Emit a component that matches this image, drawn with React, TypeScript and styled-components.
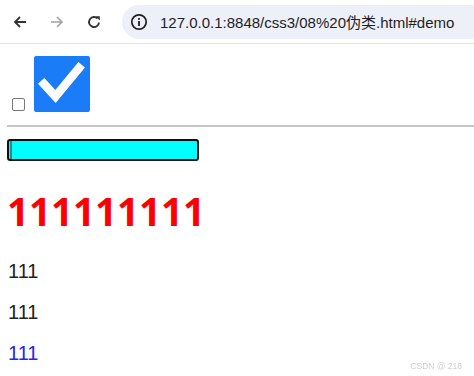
import styled, { createGlobalStyle } from 'styled-components'

const GlobalStyle = createGlobalStyle`
  html, body {
    margin: 0;
    padding: 0;
    background: #fff;
    font-family: "Liberation Sans", Arial, "Noto Sans CJK SC", sans-serif;
  }
`

const BrowserBar = () => {
  return <Toolbar>
    <NavButton>
      <svg width="16" height="16" viewBox="0 0 16 16">
        <path d="M14 8H3M8 3L3 8l5 5" fill="none" stroke="#333" strokeWidth="1.8" />
      </svg>
    </NavButton>
    <NavButton>
      <svg width="16" height="16" viewBox="0 0 16 16">
        <path d="M2 8h11M8 3l5 5-5 5" fill="none" stroke="#a2a2a2" strokeWidth="1.6" />
      </svg>
    </NavButton>
    <NavButton>
      <svg width="16" height="16" viewBox="0 0 16 16">
        <path d="M13 8.5A5 5 0 1 1 11.5 4.4" fill="none" stroke="#333" strokeWidth="1.9" />
        <path d="M9.5 2.2h4.3v4.3z" fill="#333" />
      </svg>
    </NavButton>
    <UrlPill>
      <svg width="18" height="18" viewBox="0 0 18 18">
        <circle cx="9" cy="9" r="7.2" fill="none" stroke="#1f1f1f" strokeWidth="1.7" />
        <rect x="8.1" y="8" width="1.8" height="5" fill="#1f1f1f" />
        <rect x="8.1" y="5" width="1.8" height="1.8" fill="#1f1f1f" />
      </svg>
      <UrlText>127.0.0.1:8848/css3/08%20伪类.html#demo</UrlText>
    </UrlPill>
  </Toolbar>
}

const App = () => {
  return <>
    <GlobalStyle />
    <BrowserBar />
    <Page>
      <CheckRow>
        <SmallBox />
        <BigCheck>
          <svg width="56" height="56" viewBox="0 0 56 56">
            <path d="M10 28l11.5 12.5L45 12" fill="none" stroke="#fff" strokeWidth="8.5" strokeLinecap="square" />
          </svg>
        </BigCheck>
      </CheckRow>
      <Rule />
      <CyanBar>
        <Caret />
      </CyanBar>
      <Heading>111111111</Heading>
      <Lines>
        <Line>111</Line>
        <Line>111</Line>
        <Line $blue>111</Line>
      </Lines>
    </Page>
    <Watermark>CSDN @ 218</Watermark>
  </>
}

export default App

const Toolbar = styled.div`
  display: flex;
  align-items: center;
  height: 43px;
  padding-left: 7px;
  border-bottom: 1px solid #e3e3e3;
  box-sizing: content-box;
`

const NavButton = styled.div`
  width: 26px;
  height: 26px;
  margin-right: 11px;
  display: flex;
  align-items: center;
  justify-content: center;
`

const UrlPill = styled.div`
  flex: 1;
  display: flex;
  align-items: center;
  height: 34px;
  margin-left: 4px;
  padding-left: 8px;
  border-radius: 17px 0 0 17px;
  background: #edf0f8;
  gap: 12px;
`

const UrlText = styled.span`
  font-size: 15px;
  color: #1f1f1f;
  white-space: nowrap;
  font-family: "Liberation Sans", Arial, "Noto Sans CJK SC", sans-serif;
`

const Page = styled.div`
  padding: 12px 0 0 7px;
`

const CheckRow = styled.div`
  display: flex;
  align-items: flex-end;
  gap: 9px;
  padding-left: 5px;
`

const SmallBox = styled.div`
  width: 11px;
  height: 11px;
  margin-bottom: 1px;
  border: 1px solid #777;
  border-radius: 2px;
  background: #fff;
`

const BigCheck = styled.div`
  width: 56px;
  height: 56px;
  border-radius: 2px;
  background: #1a7cf7;
  display: flex;
`

const Rule = styled.div`
  height: 2px;
  margin-top: 13px;
  background: #c6c6c6;
`

const CyanBar = styled.div`
  width: 187px;
  height: 18px;
  margin-top: 12px;
  border: 2px solid #111;
  border-radius: 3px;
  background: #00ffff;
  display: flex;
  padding-left: 1px;
`

const Caret = styled.div`
  width: 2px;
  height: 100%;
  background: #1e8f8f;
`

const Heading = styled.h1`
  margin: 30px 0 0 0;
  font-family: "Open Sans", "Liberation Sans", sans-serif;
  font-size: 38.5px;
  line-height: 40px;
  font-weight: 700;
  color: #ff0000;
`

const Lines = styled.div`
  display: flex;
  flex-direction: column;
  gap: 19px;
  margin-top: 29px;
  padding-left: 1px;
`

const Line = styled.p<{ $blue?: boolean }>`
  margin: 0;
  font-size: 20px;
  line-height: 22px;
  color: ${p => (p.$blue ? '#2525f0' : '#222')};
`

const Watermark = styled.div`
  position: fixed;
  right: 12px;
  bottom: 5px;
  font-size: 8.5px;
  color: #cfcfcf;
`
